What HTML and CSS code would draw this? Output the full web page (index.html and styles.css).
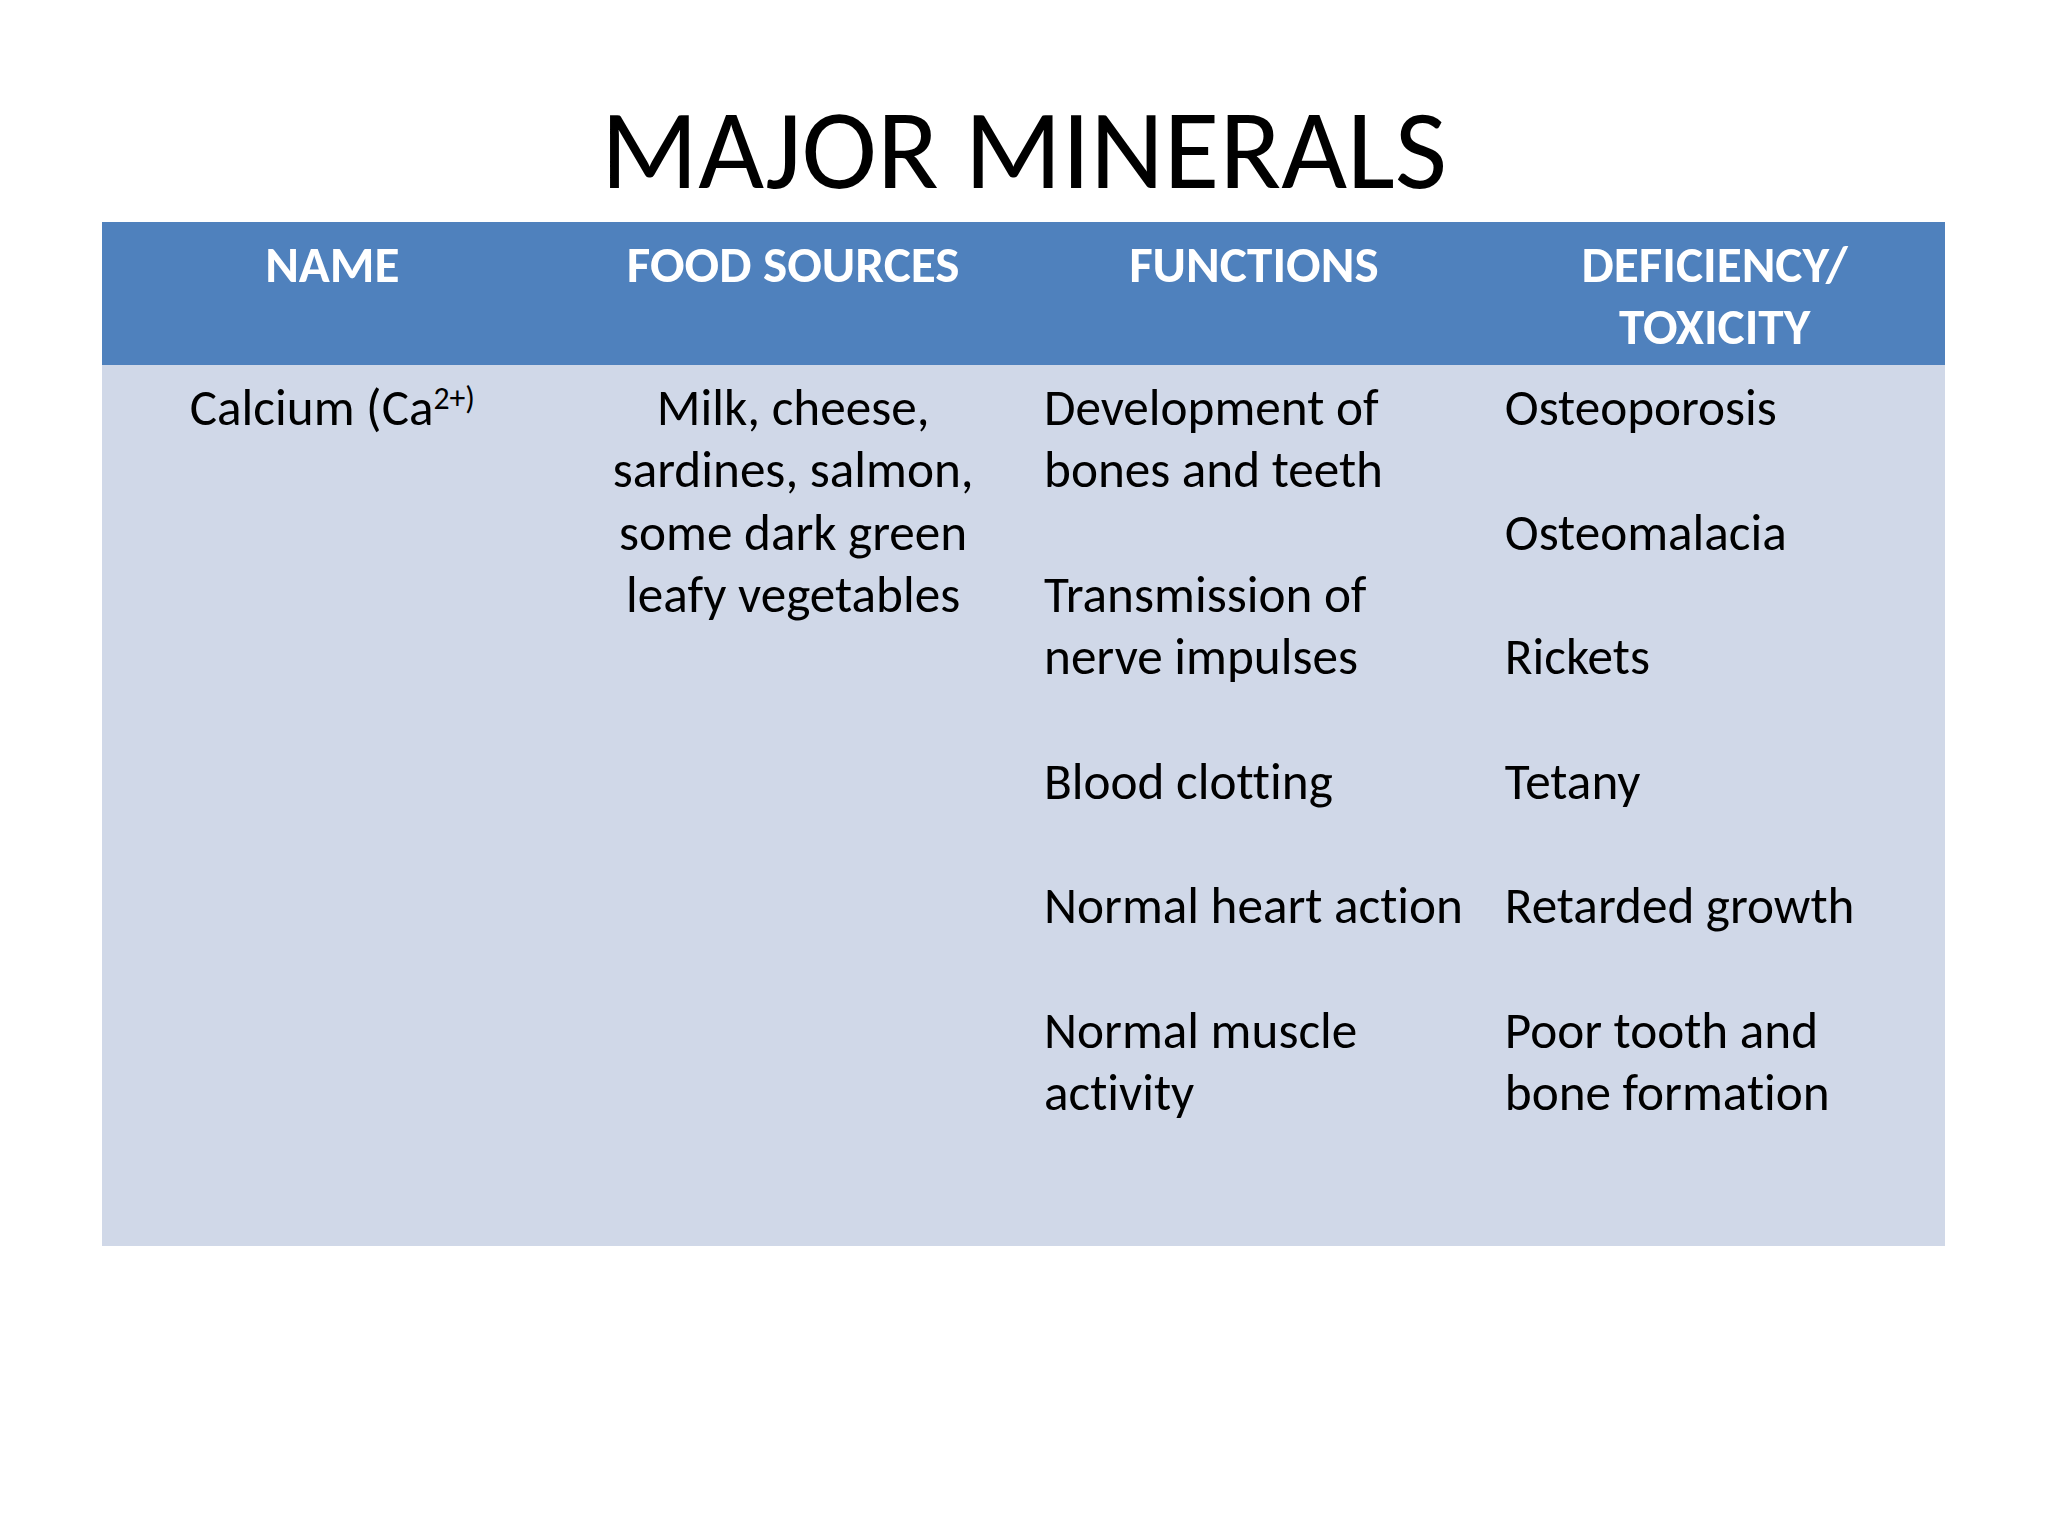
FILE: index.html
```html
<!DOCTYPE html>
<html lang="en">
<head>
<meta charset="utf-8">
<title>Major Minerals</title>
<link rel="stylesheet" href="styles.css">
</head>
<body>
<div class="slide">
  <h1 class="title">MAJOR MINERALS</h1>
  <div class="table">
    <div class="row head">
      <div class="cell center">NAME</div>
      <div class="cell center">FOOD SOURCES</div>
      <div class="cell center">FUNCTIONS</div>
      <div class="cell center">DEFICIENCY/<br>TOXICITY</div>
    </div>
    <div class="row body">
      <div class="cell center"><p>Calcium (Ca<sup class="sup">2+)</sup></p></div>
      <div class="cell center"><p>Milk, cheese,<br>sardines, salmon,<br>some dark green<br>leafy vegetables</p></div>
      <div class="cell list">
        <p>Development of<br>bones and teeth</p>
        <p>Transmission of<br>nerve impulses</p>
        <p>Blood clotting</p>
        <p>Normal heart action</p>
        <p>Normal muscle<br>activity</p>
      </div>
      <div class="cell list">
        <p>Osteoporosis</p>
        <p>Osteomalacia</p>
        <p>Rickets</p>
        <p>Tetany</p>
        <p>Retarded growth</p>
        <p>Poor tooth and<br>bone formation</p>
      </div>
    </div>
  </div>
</div>
</body>
</html>
```

FILE: styles.css
```css
html, body {
  margin: 0;
  padding: 0;
  background: #ffffff;
}

.slide {
  width: 2048px;
  height: 1536px;
  box-sizing: border-box;
  padding-top: 92px;
  font-family: "Carlito", "Lato", "Liberation Sans", sans-serif;
  font-variant-ligatures: no-common-ligatures;
  color: #000000;
}

.title {
  margin: 0;
  font-size: 113.8px;
  line-height: 115px;
  font-weight: 400;
  text-align: center;
}

.table {
  margin: 15px 0 0 102px;
  width: 1843px;
}

.row {
  display: grid;
  grid-template-columns: repeat(4, 1fr);
}

.head {
  background: #4f81bd;
  color: #ffffff;
  font-weight: 700;
}

.body {
  background: #d0d8e8;
  height: 881px;
}

.cell {
  font-size: 51.2px;
  line-height: 62.3px;
  padding: 12px 20.5px 6.4px;
}

.cell p {
  margin: 0;
}

.list p {
  margin-bottom: 62.3px;
}

.center {
  text-align: center;
}

.sup {
  font-size: 0.62em;
  line-height: 0;
  vertical-align: 0.52em;
}
```
